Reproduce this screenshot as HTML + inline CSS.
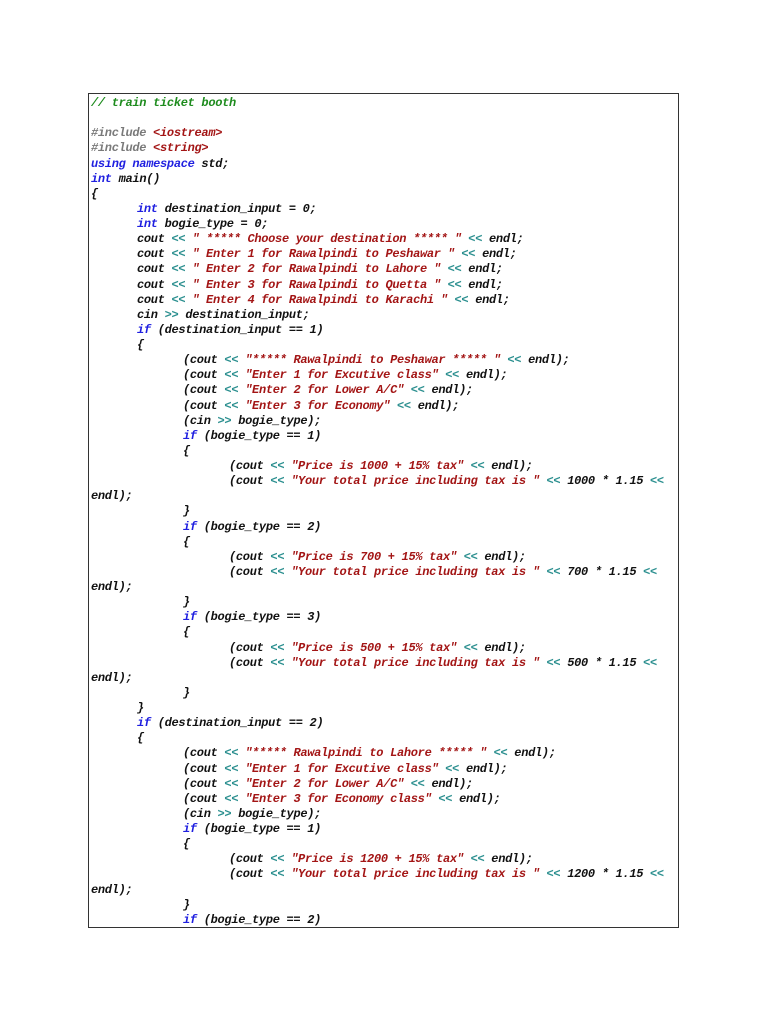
<!DOCTYPE html>
<html><head><meta charset="utf-8"><style>
html,body{margin:0;padding:0;background:#fff;width:768px;height:1024px;overflow:hidden}
#box{position:absolute;left:88px;top:93px;width:589px;height:833px;border:1px solid #333;}
#code{position:absolute;left:2px;top:2px;font-family:"Liberation Mono",monospace;font-size:12px;letter-spacing:-0.3px;font-weight:bold;font-style:italic;color:#111;line-height:15.13px;white-space:pre}
.l{height:15.13px}
.i1{padding-left:46px}.i2{padding-left:92px}.i3{padding-left:138px}
.k{color:#1f1fe0}.s{color:#a31515}.o{color:#2b8f8f}.c{color:#1e8c1e}.p{color:#7a7a7a}
</style></head><body><div id="box"><div id="code"><div class="l"><span class="c">// train ticket booth</span></div><div class="l"> </div><div class="l"><span class="p">#include</span> <span class="s">&lt;iostream&gt;</span></div><div class="l"><span class="p">#include</span> <span class="s">&lt;string&gt;</span></div><div class="l"><span class="k">using namespace</span> std;</div><div class="l"><span class="k">int</span> main()</div><div class="l">{</div><div class="l i1"><span class="k">int</span> destination_input = 0;</div><div class="l i1"><span class="k">int</span> bogie_type = 0;</div><div class="l i1">cout <span class="o">&lt;&lt;</span> <span class="s">" ***** Choose your destination ***** "</span> <span class="o">&lt;&lt;</span> endl;</div><div class="l i1">cout <span class="o">&lt;&lt;</span> <span class="s">" Enter 1 for Rawalpindi to Peshawar "</span> <span class="o">&lt;&lt;</span> endl;</div><div class="l i1">cout <span class="o">&lt;&lt;</span> <span class="s">" Enter 2 for Rawalpindi to Lahore "</span> <span class="o">&lt;&lt;</span> endl;</div><div class="l i1">cout <span class="o">&lt;&lt;</span> <span class="s">" Enter 3 for Rawalpindi to Quetta "</span> <span class="o">&lt;&lt;</span> endl;</div><div class="l i1">cout <span class="o">&lt;&lt;</span> <span class="s">" Enter 4 for Rawalpindi to Karachi "</span> <span class="o">&lt;&lt;</span> endl;</div><div class="l i1">cin <span class="o">&gt;&gt;</span> destination_input;</div><div class="l i1"><span class="k">if</span> (destination_input == 1)</div><div class="l i1">{</div><div class="l i2">(cout <span class="o">&lt;&lt;</span> <span class="s">"***** Rawalpindi to Peshawar ***** "</span> <span class="o">&lt;&lt;</span> endl);</div><div class="l i2">(cout <span class="o">&lt;&lt;</span> <span class="s">"Enter 1 for Excutive class"</span> <span class="o">&lt;&lt;</span> endl);</div><div class="l i2">(cout <span class="o">&lt;&lt;</span> <span class="s">"Enter 2 for Lower A/C"</span> <span class="o">&lt;&lt;</span> endl);</div><div class="l i2">(cout <span class="o">&lt;&lt;</span> <span class="s">"Enter 3 for Economy"</span> <span class="o">&lt;&lt;</span> endl);</div><div class="l i2">(cin <span class="o">&gt;&gt;</span> bogie_type);</div><div class="l i2"><span class="k">if</span> (bogie_type == 1)</div><div class="l i2">{</div><div class="l i3">(cout <span class="o">&lt;&lt;</span> <span class="s">"Price is 1000 + 15% tax"</span> <span class="o">&lt;&lt;</span> endl);</div><div class="l i3">(cout <span class="o">&lt;&lt;</span> <span class="s">"Your total price including tax is "</span> <span class="o">&lt;&lt;</span> 1000 * 1.15 <span class="o">&lt;&lt;</span></div><div class="l">endl);</div><div class="l i2">}</div><div class="l i2"><span class="k">if</span> (bogie_type == 2)</div><div class="l i2">{</div><div class="l i3">(cout <span class="o">&lt;&lt;</span> <span class="s">"Price is 700 + 15% tax"</span> <span class="o">&lt;&lt;</span> endl);</div><div class="l i3">(cout <span class="o">&lt;&lt;</span> <span class="s">"Your total price including tax is "</span> <span class="o">&lt;&lt;</span> 700 * 1.15 <span class="o">&lt;&lt;</span></div><div class="l">endl);</div><div class="l i2">}</div><div class="l i2"><span class="k">if</span> (bogie_type == 3)</div><div class="l i2">{</div><div class="l i3">(cout <span class="o">&lt;&lt;</span> <span class="s">"Price is 500 + 15% tax"</span> <span class="o">&lt;&lt;</span> endl);</div><div class="l i3">(cout <span class="o">&lt;&lt;</span> <span class="s">"Your total price including tax is "</span> <span class="o">&lt;&lt;</span> 500 * 1.15 <span class="o">&lt;&lt;</span></div><div class="l">endl);</div><div class="l i2">}</div><div class="l i1">}</div><div class="l i1"><span class="k">if</span> (destination_input == 2)</div><div class="l i1">{</div><div class="l i2">(cout <span class="o">&lt;&lt;</span> <span class="s">"***** Rawalpindi to Lahore ***** "</span> <span class="o">&lt;&lt;</span> endl);</div><div class="l i2">(cout <span class="o">&lt;&lt;</span> <span class="s">"Enter 1 for Excutive class"</span> <span class="o">&lt;&lt;</span> endl);</div><div class="l i2">(cout <span class="o">&lt;&lt;</span> <span class="s">"Enter 2 for Lower A/C"</span> <span class="o">&lt;&lt;</span> endl);</div><div class="l i2">(cout <span class="o">&lt;&lt;</span> <span class="s">"Enter 3 for Economy class"</span> <span class="o">&lt;&lt;</span> endl);</div><div class="l i2">(cin <span class="o">&gt;&gt;</span> bogie_type);</div><div class="l i2"><span class="k">if</span> (bogie_type == 1)</div><div class="l i2">{</div><div class="l i3">(cout <span class="o">&lt;&lt;</span> <span class="s">"Price is 1200 + 15% tax"</span> <span class="o">&lt;&lt;</span> endl);</div><div class="l i3">(cout <span class="o">&lt;&lt;</span> <span class="s">"Your total price including tax is "</span> <span class="o">&lt;&lt;</span> 1200 * 1.15 <span class="o">&lt;&lt;</span></div><div class="l">endl);</div><div class="l i2">}</div><div class="l i2"><span class="k">if</span> (bogie_type == 2)</div></div></div></body></html>
